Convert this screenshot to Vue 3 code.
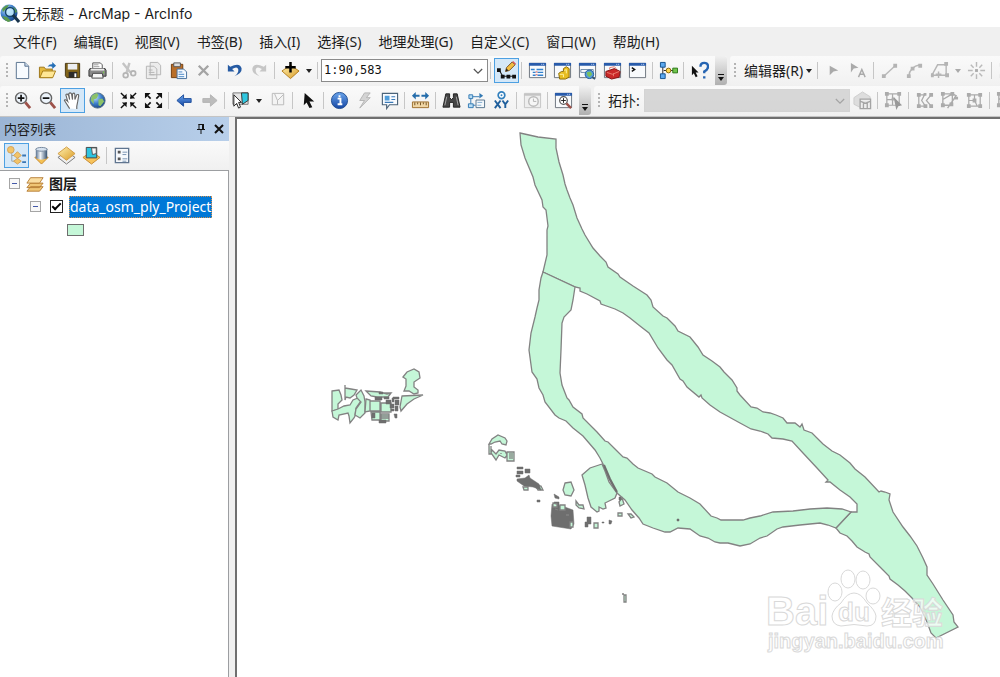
<script setup>
import { ref } from 'vue'

const menus = ['文件(F)', '编辑(E)', '视图(V)', '书签(B)', '插入(I)', '选择(S)', '地理处理(G)', '自定义(C)', '窗口(W)', '帮助(H)']

const sep = { kind: 'sep' }
const drop = { kind: 'drop' }
const b = (icon, label, active = false) => ({ kind: 'btn', icon, label, active })

const standardTools = [
  b('new', 'New'), b('open', 'Open'), b('save', 'Save'), b('print', 'Print'), sep,
  b('cut', 'Cut'), b('copy', 'Copy'), b('paste', 'Paste'), b('delete', 'Delete'), sep,
  b('undo', 'Undo'), b('redo', 'Redo'), sep, b('add', 'Add data'), drop, sep,
]
const windowTools = [
  sep, b('editor', 'Editor toolbar', true), sep,
  b('toc', 'Table of contents'), b('catalog', 'Catalog'), b('search', 'Search'), b('toolbox', 'Toolbox'), b('python', 'Python'), sep,
  b('model', 'Model builder'), sep, b('help', 'What is this'),
]
const editTools = [
  drop, sep, b('edit', 'Edit tool'), b('edittext', 'Edit annotation'), sep,
  b('line', 'Straight segment'), b('arc', 'Arc segment'), b('trace', 'Trace'), { kind: 'drop', off: true },
  b('burst', 'Point'), sep, b('square', 'Edit vertices'),
]
const viewTools = [
  b('zoomin', 'Zoom in'), b('zoomout', 'Zoom out'), b('pan', 'Pan', true), b('globe', 'Full extent'), sep,
  b('shrink', 'Fixed zoom in'), b('expand', 'Fixed zoom out'), sep, b('back', 'Back'), b('forward', 'Forward'), sep,
  b('select', 'Select features'), drop, b('clear', 'Clear selection'), sep, b('pointer', 'Select elements'), sep,
  b('info', 'Identify'), b('bolt', 'Hyperlink'), b('popup', 'HTML popup'), sep, b('measure', 'Measure'), sep,
  b('find', 'Find'), b('route', 'Find route'), b('xy', 'Go to XY'), sep, b('time', 'Time slider'), sep, b('viewer', 'Viewer window'),
]
const topologyTools = [
  b('topo', 'Select topology'), sep, b('topoedit', 'Topology edit'), sep,
  b('toposplit', 'Modify edge'), b('topocut', 'Reshape edge'), b('square', 'Align edge'), sep, b('topocut', 'Generalize edge'),
]
const contentTools = [
  b('draworder', 'List by drawing order', true), b('source', 'List by source'), b('visible', 'List by visibility'),
  b('selected', 'List by selection'), sep, b('options', 'Options'),
]

const scale = ref('1:90,583')
const visible = ref(true)

const rivers = [
  'M520 133L538 137 556 139 556 148 559 162 563 175 565 184 567 190 570 198 573 205 577 218 582 229 585 235 593 248 600 256 606 262 608 267 618 274 620 277 633 286 647 295 651 300 653 307 663 316 667 318 675 326 678 331 690 337 698 347 703 355 712 361 720 367 724 372 732 380 737 388 737 391 740 395 751 407 757 408 763 412 770 413 776 415 783 418 787 423 795 423 800 427 802 424 804 430 812 433 823 444 832 451 840 455 850 463 855 469 865 477 879 492 881 491 885 492 890 494 889 500 893 512 903 527 910 536 917 546 923 558 927 567 927 575 933 584 943 600 953 615 954 622 958 627 936 638 931 633 927 622 920 607 912 598 905 591 898 585 890 579 889 576 883 570 870 557 869 554 865 552 857 547 852 541 847 536 840 533 836 528 851 512 857 512 857 504 850 497 840 490 830 482 826 482 828 480 817 468 803 453 792 441 783 439 772 438 768 434 760 431 751 429 740 423 720 412 710 405 702 398 701 395 699 397 687 387 683 381 680 379 672 365 667 360 658 348 649 333 640 326 630 318 623 313 615 309 601 304 600 301 587 294 580 291 580 288 575 287 543 272 547 255 547 230 548 226 546 210 543 207 542 200 535 185 533 177 525 158 521 145Z',
  'M543 272L575 287 573 300 571 310 564 317 562 323 561 350 560 373 562 385 567 398 569 400 573 407 582 414 583 418 597 432 605 441 608 442 615 449 623 457 627 458 633 464 638 468 652 474 655 477 667 483 678 492 690 498 700 504 711 516 717 518 721 520 743 520 750 518 760 516 773 512 793 511 810 509 827 508 842 509 851 512 836 528 828 525 820 523 800 525 783 527 777 529 767 536 760 538 750 544 740 546 728 543 720 543 715 542 708 538 700 536 690 529 678 528 670 532 665 532 653 528 643 524 639 518 632 510 625 500 617 493 608 477 603 464 600 458 595 450 583 436 573 428 566 421 559 418 555 415 545 402 543 395 539 388 537 379 532 372 529 350 531 333 535 317 537 308 539 300 539 290 541 278Z',
]
const parcels = [
  'M602 464L590 468 582 475 585 485 588 498 591 507 597 512 599 511 599 507 603 509 606 508 605 503 615 498 617 493 609 482 605 471Z',
  'M403 377L407 372 414 369 419 372 420 378 414 382 414 387 418 390 418 393 414 394 409 391 404 391 406 386 406 379Z',
  'M402 396L423 395 414 399 407 404 401 411 400 407Z',
  'M332 391L339 390 341 395 342 400 338 404 338 410 332 411Z',
  'M332 411L338 409 344 406 350 405 353 400 358 398 361 401 356 408 355 416 354 418 350 423 349 416 348 413 339 415 338 420 333 417Z',
  'M345 388L351 389 357 390 354 395 350 398 346 397 345 400Z M345 388V385',
  'M356 395L361 390 364 396 365 402 365 413 360 418 355 415 356 409 361 402 357 398Z',
  'M366 391L380 392 387 394 391 393 388 397 377 397 371 396Z M380 393L391 393',
  'M366 399L370 400 370 411 365 412Z M370 401H380V411H370Z M381 403H391V412H381Z M371 412H380V420H372Z M381 414H389V421H381Z M381 416H389M381 418H389',
  'M489 444L492 439 498 435 505 438 507 441 506 445 502 444 500 441 495 442 491 444Z M492 450L496 454 499 450 505 451 507 455 505 458 499 455 496 460 491 453Z M507 452H514V461H507Z M510 453V459M512 453V459M489 444V454H492M491 446V453M501 453V454',
  'M565 483L571 482 574 490 571 496 565 495 563 490Z',
  'M576 501L579 505 583 505 584 509 579 508 576 505Z M594 523H598V528H594Z M619 502L622 498 624 504 620 506Z M618 513H622V516H618Z M628 514L631 514 634 517 631 518Z',
  'M624 595H626V602H624Z M622 594H624 M535 485L541 486 543 490 538 490Z M523 487H528V490H524Z',
]
const blocks = [
  'M517 467H523V469H517Z M517 471H523V474H517Z M516 475H520V477H516Z M525 469H530V473H525Z M517 479L525 478 529 475 530 478 539 484 541 490 533 487 524 486 517 481Z',
  'M552 504L562 506 573 510 574 524 571 529 552 526 551 516Z M554 502H559V508H554Z',
  'M554 494L559 497 559 499 555 498Z M537 500H540V502H537Z M587 517H591V524H588V527H585V522H587Z M609 520L612 521 611 524H609Z M602 522H604V523H602Z M619 497H621V500H619Z',
  'M375 397H382V400H375Z M384 397H389V399H384Z M386 400H391V404H386Z M392 398H394V402H392Z M393 397H399V399H393Z M395 400H399V405H395Z M390 404H394V408H390Z M395 406H398V411H395Z M391 409H394V411H391Z M372 413H375V418H372Z M379 420H386V423H379Z M394 414H397V418H395Z M379 392H383V394H379Z M677 519H679V521H677Z',
]
</script>

<template>
  <div class="app">
    <svg class="defs" aria-hidden="true">
      <defs>
        <linearGradient id="gold" x1="0" y1="0" x2="1" y2="1"><stop offset="0" stop-color="#fff1b0" /><stop offset="1" stop-color="#d99a24" /></linearGradient>
        <linearGradient id="steel" x1="0" y1="0" x2="1" y2="0"><stop offset="0" stop-color="#58718f" /><stop offset=".4" stop-color="#f2f6fa" /><stop offset="1" stop-color="#34506f" /></linearGradient>
        <linearGradient id="blue" x1="0" y1="0" x2="0" y2="1"><stop offset="0" stop-color="#6aa5ec" /><stop offset="1" stop-color="#1445a3" /></linearGradient>
        <radialGradient id="sea" cx=".35" cy=".3" r=".8"><stop offset="0" stop-color="#bfe0ff" /><stop offset=".5" stop-color="#3e7fcb" /><stop offset="1" stop-color="#123a7c" /></radialGradient>
      </defs>
      <symbol id="i-app" viewBox="0 0 20 20"><circle cx="9" cy="9" r="8.500" fill="url(#sea)" /><path d="M2 5Q5 1 9 1L7 4 3 8ZM2 12l5 1 4 4-3 1Q4 16 2 12M13 3q3 1 4 5l-2 1" fill="#5b9a4c" /><circle cx="10" cy="8" r="4.500" fill="#c8efff" fill-opacity=".85" stroke="#17466b" stroke-width="1.500" /><path d="M13 11l6 7" stroke="#18344b" stroke-width="3" /></symbol>
      <symbol id="i-new" viewBox="0 0 20 20"><path d="M3.500 1.500h9l4 4v13h-13z" fill="#f7fbff" stroke="#56708c" /><path d="M12.500 1.500v4h4" fill="#c7d9ec" stroke="#56708c" /></symbol>
      <symbol id="i-open" viewBox="0 0 20 20"><path d="M1.500 17.500V6.500h5l1.500 2h7v9z" fill="#e5b93e" stroke="#9b7417" /><path d="M2 17.500L5 10.500h13.500l-3 7z" fill="#ffe795" stroke="#a67c16" /><path d="M10 6q2-3 5-2.500V1l4 4-4 3.500V6q-2-1-5 0z" fill="#2770b7" /></symbol>
      <symbol id="i-save" viewBox="0 0 20 20"><path d="M2.500 2.500h15v15H4l-1.500-2z" fill="#806319" stroke="#443611" /><path d="M5 3h10v6H5z" fill="#eceef1" /><path d="M6 11.500h9v6H6z" fill="#2d2c2a" /><path d="M12 13h2v4h-2z" fill="#fff" /></symbol>
      <symbol id="i-print" viewBox="0 0 20 20"><path d="M5 8V2h8l2 2v4" fill="#fff" stroke="#555" /><path d="M2 8h16l1 2v6H1v-6z" fill="#888" stroke="#333" /><path d="M3 9h14" stroke="#eee" stroke-width="2" /><path d="M5 13h10l1 5H4z" fill="#f6f6f6" stroke="#444" /><path d="M6 4h5M6 6h6" stroke="#999" /><path d="M16 12h1" stroke="#71d53c" stroke-width="2" /></symbol>
      <symbol id="i-cut" viewBox="0 0 20 20"><path d="M4 2l8 10M11 2L8 12" stroke="#c4c4c4" stroke-width="2.500" fill="none" /><circle cx="7" cy="15" r="2.500" fill="none" stroke="#b4b4b4" stroke-width="1.800" /><circle cx="15" cy="13" r="2.500" fill="none" stroke="#b4b4b4" stroke-width="1.800" /></symbol>
      <symbol id="i-copy" viewBox="0 0 20 20"><path d="M6.500 1.500h8l3 3v10h-11zM2.500 5.500h8l3 3v10h-11z" fill="#ececec" stroke="#b4b4b4" /><path d="M5 9.500h4M5 12h6M5 14.500h6" stroke="#b4b4b4" /></symbol>
      <symbol id="i-paste" viewBox="0 0 20 20"><path d="M2.500 3.500h12v14h-12z" fill="#b96e28" stroke="#713b0c" /><path d="M5 2h7v4H5z" fill="#ddd" stroke="#555" /><path d="M8.500 8.500h7l3 3v7h-10z" fill="#f4f9ff" stroke="#456f9b" /><path d="M10 11.500h4M10 14h6M10 16.500h6" stroke="#4685c4" /></symbol>
      <symbol id="i-delete" viewBox="0 0 20 20"><path d="M5 5l10 10M15 5L5 15" stroke="#a4a4a4" stroke-width="2.500" /></symbol>
      <symbol id="i-undo" viewBox="0 0 20 20"><path d="M3 4v7h7L7.500 8.500Q13 5 14 9q.5 4-4 7 8-3 7.500-8Q16 1 5.500 6z" fill="#265ba3" /></symbol>
      <symbol id="i-redo" viewBox="0 0 20 20"><path d="M17 4v7h-7l2.500-2.500Q7 5 6 9q-.5 4 4 7-8-3-7.500-8Q4 1 14.500 6z" fill="#c6c6c6" /></symbol>
      <symbol id="i-add" viewBox="0 0 20 20"><path d="M10 4.500l9 6-9 8-9-8z" fill="url(#gold)" stroke="#b37d1c" /><path d="M10 1v11M4.500 6.500h11" stroke="#000" stroke-width="2.600" /></symbol>
      <symbol id="i-editor" viewBox="0 0 20 20"><path d="M2 9l4 7h12" stroke="#222" stroke-width="1.200" fill="none" /><path d="M0 7.500h4v4H0zM4 14.500h4v4H4zM10 14.500h4v4h-4zM16 14.500h4v4h-4z" fill="#111" /><path d="M9 11l1-4 6-6 3 3-6 6z" fill="#f2bd42" stroke="#765020" /><path d="M16 1l3 3 1-1-3-3z" fill="#df5757" /><path d="M9 11l1-3 2 2z" fill="#222" /></symbol>
      <symbol id="i-window" viewBox="0 0 20 20"><path d="M1.500 2.500h17v15h-17z" fill="#f8fafc" stroke="#6b737c" /><path d="M1 2h18v3H1z" fill="#285bab" /><path d="M14 3.500h1M16 3.500h1" stroke="#dce9ff" /></symbol>
      <symbol id="i-toc" viewBox="0 0 20 20"><use href="#i-window" /><path d="M3 9h4M5 12h3M5 15h3" stroke="#3282cf" stroke-width="1.500" /><path d="M9 9h7M10 12h6M10 15h6" stroke="#3282cf" stroke-width="1.500" /><path d="M8 11.500h2M8 14.500h2" stroke="#e4534b" /></symbol>
      <symbol id="i-catalog" viewBox="0 0 20 20"><use href="#i-window" /><path d="M6 13l3-2h2v-3l3-2 3 2v9l-4 2H7z" fill="#e8bd20" stroke="#8a6c09" /><path d="M7 14h4v3M12 10l2-1v4" stroke="#fff2a0" fill="none" /></symbol>
      <symbol id="i-search" viewBox="0 0 20 20"><use href="#i-window" /><path d="M3 9h13v3H3z" fill="#fff" stroke="#6987a7" /><circle cx="12" cy="14" r="4.500" fill="#559bdc" stroke="#1d5b97" /><path d="M9 12l4-1 2 3-3 3-2-2z" fill="#7ac15b" /><path d="M15 17l3 2" stroke="#385774" stroke-width="2" /></symbol>
      <symbol id="i-toolbox" viewBox="0 0 20 20"><use href="#i-window" /><path d="M3 11l9-3 6 3-1 6-8 2-6-3z" fill="#ca2828" stroke="#831313" /><path d="M7 9V7l5-1 2 2M4 12l6 2 7-3M11 13v3" fill="none" stroke="#e87d70" /></symbol>
      <symbol id="i-python" viewBox="0 0 20 20"><use href="#i-window" /><path d="M4 7l3 2-3 2" stroke="#111" stroke-width="1.500" fill="none" /></symbol>
      <symbol id="i-model" viewBox="0 0 20 20"><path d="M4 5v10M5 10h11" stroke="#222" fill="none" /><path d="M1.500 1.500h5v5h-5zM1.500 13.500h5v5h-5z" fill="#5ca9ef" stroke="#14528e" /><circle cx="10" cy="10" r="2.500" fill="#ffd44a" stroke="#876600" /><path d="M14.500 7.500h5v5h-5z" fill="#70c44d" stroke="#2b7616" /></symbol>
      <symbol id="i-help" viewBox="0 0 20 20"><path d="M2 5l7 7H6l2 4-2 1-2-4-2 2z" fill="#111" /><path d="M11 6q0-4 4-4t4 4q0 3-4 5v2M15 16v2.500" stroke="#2765b2" stroke-width="2.500" fill="none" /></symbol>
      <symbol id="i-edit" viewBox="0 0 20 20"><path d="M6 5l9 5-5 1-4 4z" fill="#aaa" /></symbol>
      <symbol id="i-edittext" viewBox="0 0 20 20"><path d="M2 2l8 5-5 1-3 4z" fill="#aaa" /><path d="M10 17l3.500-8 3.500 8M11 14h5" stroke="#aaa" stroke-width="1.500" fill="none" /></symbol>
      <symbol id="i-line" viewBox="0 0 20 20"><path d="M4 16L16 5" stroke="#b8b8b8" stroke-width="1.500" /><path d="M2 14h4v4H2zM14 3h4v4h-4z" fill="#b4b4b4" /></symbol>
      <symbol id="i-arc" viewBox="0 0 20 20"><path d="M4 16Q5 6 16 4" fill="none" stroke="#b8b8b8" stroke-width="1.500" /><path d="M2 14h4v4H2zM6 6h4v4H6zM14 3h4v4h-4z" fill="#b4b4b4" /></symbol>
      <symbol id="i-trace" viewBox="0 0 20 20"><path d="M2 15h15V4H8zM9 11v7M6 14h6" fill="none" stroke="#b6b6b6" stroke-width="1.500" /><path d="M15 1h4v4h-4zM1 13h3v4H1zM16 13h4v4h-4z" fill="#b4b4b4" /></symbol>
      <symbol id="i-burst" viewBox="0 0 20 20"><path d="M10 1v5M10 14v5M1 10h5M14 10h5M4 4l3 3M13 13l3 3M16 4l-3 3M7 13l-3 3" stroke="#b9b9b9" stroke-width="1.500" /><path d="M8.500 8.500h3v3h-3z" fill="#aaa" /></symbol>
      <symbol id="i-zoomin" viewBox="0 0 20 20"><circle cx="8.500" cy="7.500" r="5.800" fill="#edf4fb" stroke="#666" stroke-width="1.500" /><path d="M5 7.500h7M8.500 4v7" stroke="#111" stroke-width="1.800" /><path d="M13 12l5 6" stroke="#9d5149" stroke-width="3" /></symbol>
      <symbol id="i-zoomout" viewBox="0 0 20 20"><circle cx="8.500" cy="7.500" r="5.800" fill="#edf4fb" stroke="#666" stroke-width="1.500" /><path d="M5 7.500h7" stroke="#111" stroke-width="1.800" /><path d="M13 12l5 6" stroke="#9d5149" stroke-width="3" /></symbol>
      <symbol id="i-pan" viewBox="0 0 20 20"><path d="M7 18.500L1.500 10Q2 8 5 11L3 4q1.500-2 3 1l1 4-1-6q1.500-2 3 0l1 6V3q2-2 2.500 1v5l2-5q2-1 2 1l-1 6-1 5v3" fill="#fff" stroke="#666" stroke-width="1.200" /></symbol>
      <symbol id="i-globe" viewBox="0 0 20 20"><circle cx="10" cy="10" r="8" fill="url(#sea)" stroke="#506b82" /><path d="M4 5l5-3 2 2-2 4-3 1v5l-3-4zM11 9l4-1 2 3-4 5-2-1z" fill="#8cc267" /></symbol>
      <symbol id="i-shrink" viewBox="0 0 20 20"><path d="M2 2l6 6M18 2l-6 6M2 18l6-6M18 18l-6-6" stroke="#111" stroke-width="1.500" /><path d="M8 3v5H3zM12 3v5h5zM3 12h5v5zM12 17v-5h5z" fill="#111" /></symbol>
      <symbol id="i-expand" viewBox="0 0 20 20"><path d="M1 2h6L1 8zM13 2h6v6zM1 12l6 6H1zM19 12v6h-6z" fill="#111" /><path d="M4 5l3 3M16 5l-3 3M4 15l3-3M16 15l-3-3" stroke="#111" stroke-width="1.800" /></symbol>
      <symbol id="i-back" viewBox="0 0 20 20"><path d="M2 10l7-6v4h8v4H9v4z" fill="url(#blue)" stroke="#1d4d9b" /></symbol>
      <symbol id="i-forward" viewBox="0 0 20 20"><path d="M18 10l-7-6v4H3v4h8v4z" fill="#bcbcbc" stroke="#b4b4b4" /></symbol>
      <symbol id="i-select" viewBox="0 0 20 20"><path d="M2 2h16v12H2z" fill="#e5e5e5" stroke="#777" /><path d="M11 2h7v8l-6 4z" fill="#2fc7e0" stroke="#333" /><path d="M3 4l8 8H8l2 5-2 1-2-5-3 3z" fill="#fff" stroke="#222" /></symbol>
      <symbol id="i-clear" viewBox="0 0 20 20"><path d="M4.500 2.500h12v12h-12zM7 3l3 7 6-6M10 10v4" fill="#f3f3f3" stroke="#b9b9b9" /></symbol>
      <symbol id="i-pointer" viewBox="0 0 20 20"><path d="M6 2l10 9h-5l3 6-3 1-3-6-3 3z" fill="#111" /></symbol>
      <symbol id="i-info" viewBox="0 0 20 20"><circle cx="10" cy="10" r="8.500" fill="url(#blue)" stroke="#214e91" /><path d="M8 8h3v6M8 14h5M10 4.500v2" stroke="#fff" stroke-width="2" fill="none" /></symbol>
      <symbol id="i-bolt" viewBox="0 0 20 20"><path d="M16 2h-6l-5 8h5l-5 8 11-11h-4z" fill="#d4d4d4" stroke="#b4b4b4" /></symbol>
      <symbol id="i-popup" viewBox="0 0 20 20"><path d="M2.500 2.500h16v12H10l-3 4v-4H2.500z" fill="#f8fbff" stroke="#4b6379" stroke-width="1.200" /><path d="M5 5h5v5H5z" fill="#4f9ddb" /><path d="M12 6h4M12 9h4M5 12h9" stroke="#397ab8" stroke-width="1.200" /></symbol>
      <symbol id="i-measure" viewBox="0 0 20 20"><path d="M1 5l4-4v3h4v2H5v3zM19 5l-4-4v3h-4v2h4v3z" fill="#256dab" /><path d="M1.500 11.500h17v6h-17z" fill="#f0d6a5" stroke="#9d6f2d" /><path d="M4 12v3M7 12v2M10 12v3M13 12v2M16 12v3" stroke="#71501f" /></symbol>
      <symbol id="i-find" viewBox="0 0 20 20"><path d="M4 3h4v4l2 2 2-2V3h4l3 14h-7v-5H8v5H1z" fill="#454545" stroke="#222" /><path d="M5 6L3 15M15 6l2 9" stroke="#aaa" /></symbol>
      <symbol id="i-route" viewBox="0 0 20 20"><path d="M4 15V6h9M4 15h5" fill="none" stroke="#3379b3" /><path d="M13 2v6l4-3z" fill="#3379b3" /><path d="M1.500 13.500h5v4h-5zM2 4h4v4H2z" fill="#b9ddf4" stroke="#3379b3" /><path d="M9.500 9.500h9v8h-9z" fill="#f5f9fc" stroke="#55738c" /><path d="M11 12h5M11 15h4" stroke="#7eabce" /></symbol>
      <symbol id="i-xy" viewBox="0 0 20 20"><circle cx="10" cy="4.500" r="3.500" fill="#fff" stroke="#3380bd" stroke-width="1.800" /><circle cx="10" cy="4.500" r="1" fill="#3380bd" /><path d="M3 10l6 8M9 10l-6 8M11 10l3 4 3-4M14 14v4" stroke="#205f9c" stroke-width="2" fill="none" /></symbol>
      <symbol id="i-time" viewBox="0 0 20 20"><path d="M1.500 2.500h17v15h-17z" fill="#eee" stroke="#c4c4c4" /><path d="M1 4h18" stroke="#c4c4c4" stroke-width="2" /><circle cx="11" cy="11" r="5" fill="#f6f6f6" stroke="#bababa" stroke-width="1.500" /><path d="M11 8v3h3" stroke="#b4b4b4" fill="none" /></symbol>
      <symbol id="i-viewer" viewBox="0 0 20 20"><use href="#i-window" /><circle cx="10" cy="10" r="4" fill="#fff" stroke="#555" stroke-width="1.300" /><path d="M7.500 10h5M10 7.500v5" stroke="#222" /><path d="M13 13l5 5" stroke="#9d5149" stroke-width="2.500" /></symbol>
      <symbol id="i-topo" viewBox="0 0 20 20"><path d="M1 7l9-6 8 5v11l-9 1-8-4z" fill="#ddd" stroke="#ccc" /><path d="M7.500 8.500h11v10h-11zM8 11l5 2 5-2M11 13v5M15 12v6" fill="#eee" stroke="#a4a4a4" stroke-width="1.400" /></symbol>
      <symbol id="i-square" viewBox="0 0 20 20"><path d="M4 4h12v12H4zM4 10h6V4M10 10l3 6" fill="none" stroke="#aaa" stroke-width="1.300" /><path d="M2 2h4v4H2zM14 2h4v4h-4zM2 14h4v4H2zM14 14h4v4h-4zM8 8h4v4H8z" fill="#ababab" /></symbol>
      <symbol id="i-topoedit" viewBox="0 0 20 20"><path d="M3 3h13v12H3zM3 9h6V3M9 9v6" fill="none" stroke="#aaa" stroke-width="1.300" /><path d="M1 1h4v4H1zM14 1h4v4h-4zM1 13h4v4H1zM8 7h3v3H8z" fill="#ababab" /><path d="M10 6l9 9-4 1-2 4z" fill="#999" /></symbol>
      <symbol id="i-toposplit" viewBox="0 0 20 20"><path d="M4 4h6l-3 6 4 6H4zM17 4l-5 6 5 6" fill="none" stroke="#aaa" stroke-width="1.300" /><path d="M2 2h4v4H2zM9 2h3v3H9zM15 2h4v4h-4zM2 14h4v4H2zM9 14h4v4H9zM15 14h4v4h-4z" fill="#ababab" /></symbol>
      <symbol id="i-topocut" viewBox="0 0 20 20"><path d="M3 3h10v12H3zM3 9l10-6 4 2-9 13" fill="none" stroke="#aaa" stroke-width="1.400" /><path d="M1 1h4v4H1zM11 1h4v4h-4zM1 13h4v4H1zM10 12h4v4h-4zM15 6h4v3h-4z" fill="#ababab" /></symbol>
      <symbol id="i-draworder" viewBox="0 0 20 20"><path d="M5 6v10h6M5 10h6" fill="none" stroke="#9aa3aa" /><circle cx="4" cy="4" r="3.500" fill="#f2c469" stroke="#d3a25a" /><path d="M11 6l4 4-4 3-4-3zM11 13l4 3-4 3-4-3z" fill="#f2c469" stroke="#d3a25a" /><path d="M16 10h4M16 17h4" stroke="#3976b4" stroke-width="2" /></symbol>
      <symbol id="i-source" viewBox="0 0 20 20"><path d="M3 12l7-3 7 3-7 7z" fill="#f5c254" stroke="#c7882c" /><path d="M4 3v10q6 3 12 0V3z" fill="url(#steel)" /><ellipse cx="10" cy="3.500" rx="6" ry="2" fill="#d6e2ef" stroke="#73859b" /></symbol>
      <symbol id="i-visible" viewBox="0 0 20 20"><path d="M1 12l9-6 9 6-9 7z" fill="#eee" stroke="#777" /><path d="M1 8l9-7 9 7-9 7z" fill="url(#gold)" stroke="#d29c42" /></symbol>
      <symbol id="i-selected" viewBox="0 0 20 20"><path d="M1 12l9-6 9 6-9 7z" fill="#f7c35b" stroke="#c68a31" /><path d="M4.500 1.500h11v11h-11z" fill="#2dc4df" stroke="#444" /><path d="M10 2h5v6l-4 1z" fill="#f6f6f6" stroke="#555" /></symbol>
      <symbol id="i-options" viewBox="0 0 20 20"><path d="M2.500 2.500h14v15h-14z" fill="#f7f9fc" stroke="#60758f" stroke-width="1.400" /><path d="M5 5h3v3H5zM5 12h3v3H5z" fill="#555" /><path d="M10 6.500h5M10 9h4M10 13.500h5M10 16h4" stroke="#7892b1" /></symbol>
      <symbol id="i-layers" viewBox="0 0 20 20"><g fill="#efc574" stroke="#b47b32"><path d="M1 18l4-5h14l-4 5zM1 14l4-5h14l-4 5z" /><path d="M1 9l4-6h14l-4 6z" fill="#f9dda0" /></g></symbol>
    </svg>

    <header class="title">
      <svg class="app-icon" aria-hidden="true"><use href="#i-app" /></svg>
      <h1>无标题 - ArcMap - ArcInfo</h1>
    </header>

    <nav class="menu">
      <button v-for="m in menus" :key="m" type="button">{{ m }}</button>
    </nav>

    <div class="bars">
      <div class="row">
        <div class="bar">
          <i class="grip"></i>
          <template v-for="(t, i) in standardTools" :key="i">
            <button v-if="t.kind === 'btn'" class="tool" type="button" :aria-label="t.label"><svg><use :href="'#i-' + t.icon" /></svg></button>
            <i v-else :class="t.kind"></i>
          </template>
          <div class="combo scale">
            <select v-model="scale" aria-label="Map scale"><option>1:90,583</option></select>
            <svg class="chevron" viewBox="0 0 12 8"><path d="M1 1l5 5 5-5" /></svg>
          </div>
          <template v-for="(t, i) in windowTools" :key="i">
            <button v-if="t.kind === 'btn'" class="tool" :class="{ active: t.active }" type="button" :aria-label="t.label"><svg><use :href="'#i-' + t.icon" /></svg></button>
            <i v-else :class="t.kind"></i>
          </template>
          <button class="more" type="button" aria-label="Toolbar options"></button>
        </div>
        <div class="bar rest">
          <i class="grip"></i>
          <button class="text-button" type="button">编辑器(R)</button>
          <template v-for="(t, i) in editTools" :key="i">
            <button v-if="t.kind === 'btn'" class="tool" type="button" :aria-label="t.label"><svg><use :href="'#i-' + t.icon" /></svg></button>
            <i v-else :class="[t.kind, { off: t.off }]"></i>
          </template>
        </div>
      </div>
      <div class="row">
        <div class="bar">
          <i class="grip"></i>
          <template v-for="(t, i) in viewTools" :key="i">
            <button v-if="t.kind === 'btn'" class="tool" :class="{ active: t.active }" type="button" :aria-label="t.label"><svg><use :href="'#i-' + t.icon" /></svg></button>
            <i v-else :class="t.kind"></i>
          </template>
          <button class="more" type="button" aria-label="Toolbar options"></button>
        </div>
        <div class="bar rest">
          <i class="grip"></i>
          <label class="bar-label" for="topology">拓扑:</label>
          <div class="combo topology">
            <select id="topology" disabled></select>
            <svg class="chevron" viewBox="0 0 12 8"><path d="M1 1l5 5 5-5" /></svg>
          </div>
          <template v-for="(t, i) in topologyTools" :key="i">
            <button v-if="t.kind === 'btn'" class="tool" type="button" :aria-label="t.label"><svg><use :href="'#i-' + t.icon" /></svg></button>
            <i v-else :class="t.kind"></i>
          </template>
        </div>
      </div>
    </div>

    <main>
      <aside>
        <div class="panel-head">
          <h2>内容列表</h2>
          <button type="button" aria-label="Pin"><svg viewBox="0 0 10 10"><path d="M3 0v5M2.500.5h5M6.500 0v5M7.500 0v5M1 5.500h8M5 6v4" /></svg></button>
          <button type="button" aria-label="Close"><svg viewBox="0 0 10 10"><path d="M1 1l8 8M9 1L1 9" class="heavy" /></svg></button>
        </div>
        <div class="panel-tools">
          <template v-for="(t, i) in contentTools" :key="i">
            <button v-if="t.kind === 'btn'" class="tool" :class="{ active: t.active }" type="button" :aria-label="t.label"><svg><use :href="'#i-' + t.icon" /></svg></button>
            <i v-else :class="t.kind"></i>
          </template>
        </div>
        <ul class="tree">
          <li>
            <div class="node">
              <button class="expander" type="button" aria-label="Collapse"></button>
              <svg class="layers" aria-hidden="true"><use href="#i-layers" /></svg>
              <b>图层</b>
            </div>
            <ul>
              <li>
                <div class="node">
                  <button class="expander" type="button" aria-label="Collapse"></button>
                  <input id="layer" v-model="visible" type="checkbox" />
                  <label class="layer" for="layer">data_osm_ply_Project</label>
                </div>
                <div class="node"><span class="swatch"></span></div>
              </li>
            </ul>
          </li>
        </ul>
      </aside>

      <section class="map">
        <svg viewBox="237 119 763 558" preserveAspectRatio="xMinYMin meet" role="img" aria-label="Map">
          <g v-if="visible">
            <g class="land">
              <path v-for="d in rivers" :key="d" :d="d" />
              <path v-for="d in parcels" :key="d" :d="d" />
            </g>
            <path v-for="d in blocks" :key="d" :d="d" class="block" />
            <path d="M604 465L610 479 617 492" class="road" />
            <g class="land">
              <path d="M560 505h5v5h-5zM553 503l4 1v3h-4zM570 522h3v5h-3zM566 515h3M555 509l3 1" />
            </g>
          </g>
          <g class="mark">
            <text x="766" y="625" class="brand">Bai</text>
            <ellipse cx="835" cy="592" rx="7" ry="9" />
            <ellipse cx="848" cy="579" rx="7" ry="9" />
            <ellipse cx="863" cy="580" rx="7" ry="9" />
            <ellipse cx="873" cy="596" rx="7" ry="8" />
            <path d="M854 593Q861 593 867 603 875 610 876 616 876 626 867 626 854 623 841 626 832 625 832 616 833 609 841 603 847 593 854 593Z" />
            <text x="838" y="621" class="du">du</text>
            <text x="881" y="624" class="cn">经验</text>
            <text x="768" y="648" class="url">jingyan.baidu.com</text>
          </g>
        </svg>
      </section>
    </main>
  </div>
</template>

<style>
body {
  margin: 0;
}
</style>

<style scoped>
.app {
  display: flex;
  flex-direction: column;
  min-height: 100vh;
  overflow: hidden;
  background: #f0f0f0;
  color: #1c1c1c;
  font: 14px/20px "Noto Sans", "Noto Sans CJK SC", sans-serif;
}
.defs {
  position: absolute;
  width: 0;
  height: 0;
}
button {
  margin: 0;
  padding: 0;
  border: 0;
  background: none;
  color: inherit;
  font: inherit;
  white-space: nowrap;
}
.title {
  display: flex;
  align-items: center;
  gap: 2px;
  height: 27px;
  background: #fff;
}
.app-icon {
  width: 20px;
  height: 20px;
}
h1 {
  margin: 0;
  font-family: Inter, "Noto Sans CJK SC", sans-serif;
  font-size: 14px;
  font-weight: 400;
}
.menu {
  display: flex;
  align-items: center;
  gap: 17px;
  height: 29px;
  padding-left: 13px;
}
.bars {
  display: flex;
  flex-direction: column;
  gap: 1px;
  padding-bottom: 1px;
  border-bottom: 1px solid #c4c4c4;
}
.row {
  display: flex;
  gap: 3px;
  height: 29px;
  overflow: hidden;
}
.bar {
  display: flex;
  flex: none;
  align-items: center;
  border-radius: 3px;
  background: linear-gradient(#fafafa, #f1f1f1);
}
.bar.rest {
  flex: 1 0 auto;
}
.grip {
  width: 2px;
  height: 16px;
  margin: 0 2px 0 6px;
  background: repeating-linear-gradient(#b4b4b4 0 2px, transparent 2px 4px);
}
.rest .grip {
  margin: 0 8px 0 4px;
}
.tool {
  box-sizing: border-box;
  display: grid;
  flex: none;
  place-items: center;
  width: 25px;
  height: 25px;
}
.tool svg {
  width: 19px;
  height: 19px;
}
.tool.active {
  border: 1px solid #4da0e2;
  background: #d5e8f8;
}
.sep {
  flex: none;
  width: 1px;
  height: 17px;
  margin: 0 3px 0 2px;
  background: #c6c6c6;
}
.drop {
  flex: none;
  width: 12px;
}
.drop::before {
  content: "";
  display: block;
  width: 0;
  margin: 0 auto;
  border: 3px solid transparent;
  border-top: 4px solid #222;
  border-bottom: 0;
}
.drop.off::before {
  border-top-color: #aaa;
}
.more {
  display: flex;
  flex-direction: column;
  align-items: center;
  justify-content: flex-end;
  align-self: stretch;
  gap: 2px;
  width: 12px;
  margin-left: 3px;
  padding-bottom: 4px;
  border-radius: 0 3px 3px 0;
  background: linear-gradient(#f0f0f0, #b0b0b0);
}
.more::before {
  content: "";
  width: 6px;
  height: 1px;
  background: #111;
}
.more::after {
  content: "";
  border: 3px solid transparent;
  border-top: 4px solid #111;
  border-bottom: 0;
}
.combo {
  position: relative;
  flex: none;
  height: 23px;
}
.combo select {
  box-sizing: border-box;
  display: block;
  width: 100%;
  height: 100%;
  padding: 0 0 2px 2px;
  border: 1px solid #8b8b8b;
  border-radius: 0;
  appearance: none;
  background: #fff;
  color: #111;
  font: 12px/18px "DejaVu Sans Mono", monospace;
}
.scale {
  width: 167px;
}
.topology {
  width: 206px;
}
.topology select {
  border-color: #c6c6c6;
  background: #cacaca;
}
.chevron {
  position: absolute;
  top: 9px;
  right: 5px;
  width: 10px;
  height: 7px;
  pointer-events: none;
}
.chevron path {
  fill: none;
  stroke: #555;
  stroke-width: 1.5;
}
.topology .chevron path {
  stroke: #a4a4a4;
}
.bar-label {
  width: 36px;
}
main {
  display: flex;
  flex: 1;
  gap: 6px;
}
aside {
  display: flex;
  flex: none;
  flex-direction: column;
  width: 229px;
}
.panel-head {
  display: flex;
  align-items: center;
  gap: 8px;
  height: 24px;
  padding: 0 5px 0 4px;
  background: linear-gradient(90deg, #9bb5d5, #b8cfea);
}
.panel-head h2 {
  flex: 1;
  margin: 0;
  font-size: 13px;
  font-weight: 400;
}
.panel-head button {
  width: 10px;
  height: 10px;
}
.panel-head svg {
  display: block;
  width: 10px;
  height: 10px;
}
.panel-head path {
  fill: none;
  stroke: #111;
}
.panel-head .heavy {
  stroke-width: 2;
}
.panel-tools {
  display: flex;
  align-items: center;
  height: 29px;
  padding-left: 4px;
  background: linear-gradient(#fafafa, #f0f0f0);
}
ul {
  margin: 0;
  padding: 0;
  list-style: none;
}
.tree {
  flex: 1;
  padding: 1px 0 0 9px;
  border: 1px solid #9c9ea1;
  border-width: 1px 1px 0 0;
  background: #fff;
}
.tree ul {
  padding-left: 21px;
}
.node {
  display: flex;
  align-items: center;
  height: 23px;
}
.expander {
  display: grid;
  flex: none;
  place-items: center;
  box-sizing: border-box;
  width: 11px;
  height: 11px;
  border: 1px solid #a5a5a5;
  background: #f8f8f8;
}
.expander::before {
  content: "";
  width: 5px;
  height: 1px;
  background: #4358a8;
}
.layers {
  width: 18px;
  height: 18px;
  margin: 0 5px 0 6px;
}
.node input {
  box-sizing: border-box;
  display: grid;
  place-items: center;
  width: 13px;
  height: 13px;
  margin: 0 6px 0 9px;
  border: 1px solid #222;
  appearance: none;
  background: #fff;
}
.node input:checked::before {
  content: "";
  box-sizing: border-box;
  width: 9px;
  height: 5px;
  margin-bottom: 2px;
  border: solid #000;
  border-width: 0 0 2px 2px;
  transform: rotate(-45deg);
}
.layer {
  border: 1px dotted #d39150;
  background: #0078d7;
  color: #fff;
}
.swatch {
  width: 15px;
  height: 10px;
  margin-left: 37px;
  border: 1px solid #6e6e6e;
  background: #c5f7d8;
}
.map {
  position: relative;
  flex: 1;
  border: 2px solid #6f6f6f;
  border-width: 2px 0 0 2px;
  background: #fff;
}
.map svg {
  position: absolute;
  inset: 0;
  width: 100%;
  height: 100%;
}
.land path {
  fill: #c5f7d8;
  stroke: #828282;
  stroke-width: 1.3;
}
.block {
  fill: #6e6e6e;
  stroke: #6e6e6e;
  stroke-width: .5;
}
.road {
  fill: none;
  stroke: #6e6e6e;
  stroke-width: 2;
}
.mark {
  fill: #fff;
  fill-opacity: .7;
  stroke: #d9d9d9;
  stroke-width: 1;
  font-family: "Liberation Sans", "Noto Sans CJK SC", sans-serif;
  font-weight: 700;
}
.brand {
  font-size: 40px;
}
.du {
  font-size: 26px;
}
.cn {
  font-size: 31px;
}
.url {
  font-size: 20px;
}
</style>
